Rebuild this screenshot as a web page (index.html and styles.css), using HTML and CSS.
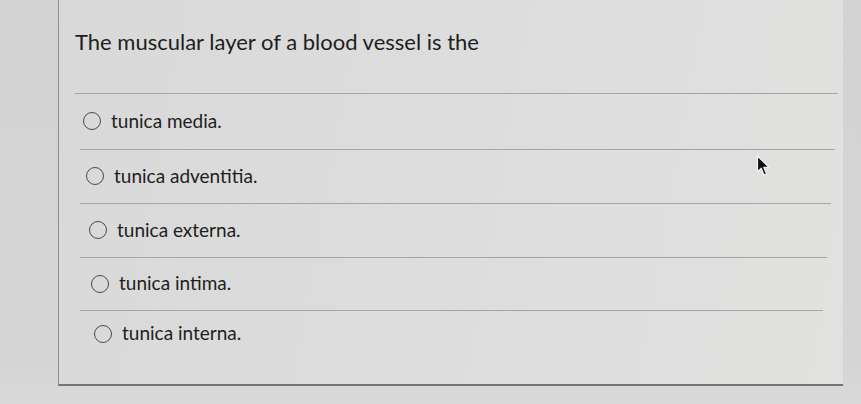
FILE: index.html
```html
<!DOCTYPE html>
<html>
<head>
<meta charset="utf-8">
<link rel="stylesheet" href="styles.css">
</head>
<body>
<div class="page">
  <div class="card">
    <div class="question">The muscular layer of a blood vessel is the</div>
    <ul class="options">
      <li class="option"><span class="radio"></span><span class="label">tunica media.</span></li>
      <li class="option"><span class="radio"></span><span class="label">tunica adventitia.</span></li>
      <li class="option"><span class="radio"></span><span class="label">tunica externa.</span></li>
      <li class="option"><span class="radio"></span><span class="label">tunica intima.</span></li>
      <li class="option"><span class="radio"></span><span class="label">tunica interna.</span></li>
    </ul>
  </div>
  <svg class="cursor" width="15" height="23" viewBox="0 0 15 23"><path d="M1.5 1 L1.5 17 L5.2 13.2 L8 20 L10.6 19 L7.8 12.4 L13 12.4 Z" fill="#111" stroke="#f2f2f2" stroke-width="1.2" stroke-linejoin="round"/></svg>
</div>
</body>
</html>
```
FILE: styles.css
```css
html, body {
  margin: 0;
  padding: 0;
}
body {
  background: linear-gradient(180deg, #d2d3d2 0%, #d4d5d4 90%, #d9d9d9 100%);
  font-family: Lato, "Open Sans", sans-serif;
  width: 861px;
  height: 404px;
  overflow: hidden;
}
.page {
  position: relative;
  width: 861px;
  height: 404px;
  padding-left: 58px;
  box-sizing: border-box;
}
.card {
  width: 785px;
  height: 386px;
  box-sizing: border-box;
  background: linear-gradient(100deg, #d8d9d8 0%, #dcdddc 50%, #e1e1e0 100%);
  border-left: 1px solid #8e8f8e;
  border-bottom: 2px solid #737473;
  padding: 28px 0 0 15px;
}
.question {
  font-size: 22px;
  color: #1e1e1e;
  line-height: 28px;
  height: 65px;
  border-bottom: 1px solid #a5a6a5;
  margin-right: 5px;
  margin-left: 1px;
}
.options {
  list-style: none;
  margin: 0 8px 0 4px;
  padding: 0;
}
.option {
  display: flex;
  align-items: center;
  height: 54px;
  box-sizing: border-box;
  border-bottom: 1px solid #a5a6a5;
  padding-left: 5px;
  padding-bottom: 3px;
}
.option:nth-child(1) { height: 56px; margin-left: 2px; padding-left: 3px; }
.option:nth-child(2) { padding-left: 6px; margin-right: 4px; margin-left: 2px; }
.option:nth-child(3) { padding-left: 9px; margin-right: 8px; margin-left: 2px; }
.option:nth-child(4) { padding-left: 11px; height: 53px; margin-right: 12px; margin-left: 2px; }
.option:nth-child(5) { padding-left: 16px; height: 46px; border-bottom: none; }
.radio {
  width: 18px;
  height: 18px;
  box-sizing: border-box;
  border: 1.5px solid #4a4a4a;
  border-radius: 50%;
  margin-right: 10px;
  flex: none;
  position: relative;
  top: 1px;
}
.label {
  font-size: 19px;
  color: #1e1e1e;
}
.cursor {
  position: absolute;
  left: 756px;
  top: 155px;
}
```
